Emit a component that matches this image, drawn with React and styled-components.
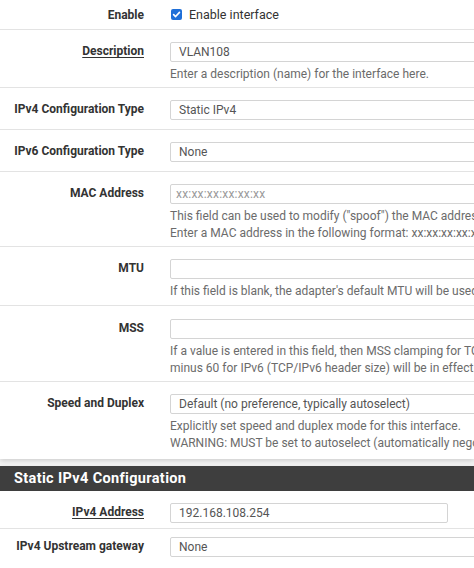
import React from 'react';
import styled, { createGlobalStyle } from 'styled-components';

const GlobalStyle = createGlobalStyle`
  html, body {
    margin: 0;
    padding: 0;
    background: #f5f5f5;
    overflow: hidden;
  }
  body {
    font-family: Roboto, 'Liberation Sans', sans-serif;
    color: #333;
  }
`;

const Page = styled.div`
  width: 474px;
  height: 568px;
  overflow: hidden;
  background: #f5f5f5;
`;

const Panel = styled.div`
  background: #fff;
  box-shadow: 0 2px 5px rgba(0, 0, 0, 0.16);
  margin-bottom: ${(p) => p.$gap || 0}px;
`;

const Row = styled.div`
  display: grid;
  grid-template-columns: 144px 1fr;
  column-gap: 26px;
  padding: ${(p) => p.$top ?? 12}px 0 ${(p) => p.$bottom ?? 4}px;
  min-height: ${(p) => p.$minHeight || 0}px;
  box-sizing: border-box;
  border-bottom: ${(p) => (p.$last ? 'none' : '1px solid #e3e3e3')};
  align-items: ${(p) => (p.$center ? 'center' : 'start')};
`;

const Label = styled.div`
  text-align: right;
  font-weight: 700;
  font-size: 12px;
  line-height: 18px;
  color: #333;
  white-space: nowrap;
  span {
    text-decoration: ${(p) => (p.$underline ? 'underline' : 'none')};
    text-underline-offset: 2px;
  }
`;

const Field = styled.div`
  min-width: 0;
  white-space: nowrap;
`;

const Input = styled.div`
  box-sizing: border-box;
  width: ${(p) => p.$width || 420}px;
  height: 20px;
  border: 1px solid #d4d4d4;
  border-radius: 2px;
  padding: 0 ${(p) => (p.$placeholder ? 5 : 8)}px;
  font-size: 12px;
  line-height: 18px;
  color: ${(p) => (p.$placeholder ? '#9a9a9a' : '#555')};
  letter-spacing: ${(p) => (p.$placeholder ? '0.2px' : '0')};
  background: #fff;
`;

const Help = styled.div`
  margin-top: 4px;
  font-size: 12px;
  line-height: 17px;
  color: #6b6b6b;
`;

const CheckLine = styled.label`
  display: flex;
  align-items: center;
  gap: 7px;
  font-size: 12.5px;
  color: #333;
`;

const Box = styled.span`
  width: 11px;
  height: 11px;
  border-radius: 2px;
  background: #1f6fd8;
  display: inline-flex;
  align-items: center;
  justify-content: center;
  margin-left: 1px;
`;

const SectionHeader = styled.div`
  background: #3e3e3e;
  color: #fff;
  font-weight: 700;
  font-size: 14.5px;
  letter-spacing: 0.35px;
  height: 25px;
  line-height: 25px;
  padding-left: 14px;
`;

function Check() {
  return (
    <Box>
      <svg width="9" height="9" viewBox="0 0 10 10">
        <path d="M1.8 5.2 L4 7.3 L8.3 2.6" fill="none" stroke="#fff" strokeWidth="1.8" strokeLinecap="round" strokeLinejoin="round" />
      </svg>
    </Box>
  );
}

export default function App() {
  return (
    <Page>
      <GlobalStyle />
      <Panel $gap={7}>
        <Row $top={0} $bottom={0} $minHeight={30} $center>
          <Label>Enable</Label>
          <Field>
            <CheckLine>
              <Check />
              Enable interface
            </CheckLine>
          </Field>
        </Row>
        <Row>
          <Label $underline><span>Description</span></Label>
          <Field>
            <Input>VLAN108</Input>
            <Help>Enter a description (name) for the interface here.</Help>
          </Field>
        </Row>
        <Row $bottom={9}>
          <Label>IPv4 Configuration Type</Label>
          <Field>
            <Input>Static IPv4</Input>
          </Field>
        </Row>
        <Row $bottom={9}>
          <Label>IPv6 Configuration Type</Label>
          <Field>
            <Input>None</Input>
          </Field>
        </Row>
        <Row>
          <Label>MAC Address</Label>
          <Field>
            <Input $placeholder>xx:xx:xx:xx:xx:xx</Input>
            <Help>
              This field can be used to modify ("spoof") the MAC address of this interface.
              <br />
              Enter a MAC address in the following format: xx:xx:xx:xx:xx:xx or leave blank.
            </Help>
          </Field>
        </Row>
        <Row $bottom={5}>
          <Label>MTU</Label>
          <Field>
            <Input />
            <Help>If this field is blank, the adapter's default MTU will be used.</Help>
          </Field>
        </Row>
        <Row $top={13}>
          <Label>MSS</Label>
          <Field>
            <Input />
            <Help>
              If a value is entered in this field, then MSS clamping for TCP connections
              <br />
              minus 60 for IPv6 (TCP/IPv6 header size) will be in effect.
            </Help>
          </Field>
        </Row>
        <Row $bottom={7} $last>
          <Label>Speed and Duplex</Label>
          <Field>
            <Input>Default (no preference, typically autoselect)</Input>
            <Help>
              Explicitly set speed and duplex mode for this interface.
              <br />
              WARNING: MUST be set to autoselect (automatically negotiate speed).
            </Help>
          </Field>
        </Row>
      </Panel>
      <Panel>
        <SectionHeader>Static IPv4 Configuration</SectionHeader>
        <Row $top={12} $bottom={5}>
          <Label $underline><span>IPv4 Address</span></Label>
          <Field>
            <Input $width={278}>192.168.108.254</Input>
          </Field>
        </Row>
        <Row $top={8} $bottom={14} $last>
          <Label>IPv4 Upstream gateway</Label>
          <Field>
            <Input>None</Input>
          </Field>
        </Row>
      </Panel>
    </Page>
  );
}
